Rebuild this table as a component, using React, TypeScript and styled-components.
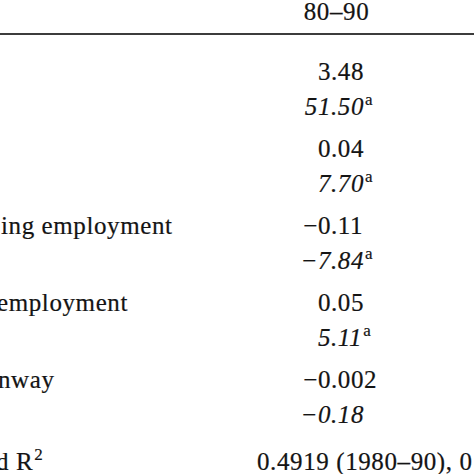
import styled, { createGlobalStyle } from "styled-components";

const GlobalStyle = createGlobalStyle`
  html, body {
    margin: 0;
    padding: 0;
    background: #ffffff;
    overflow: hidden;
  }
  #root {
    width: 474px;
    height: 474px;
    overflow: hidden;
  }
`

const Table = styled.div`
  width: 474px;
  font-family: "Liberation Serif", "Times New Roman", serif;
  font-size: 25px;
  letter-spacing: 0.6px;
  color: #141414;
  -webkit-text-stroke: 0.2px #141414;
`

const HeadRow = styled.div`
  display: grid;
  grid-template-columns: 290px 93px 1fr;
  line-height: 24px;
  padding-bottom: 9px;
  border-bottom: 2px solid #3c3c3c;
`

const HeadCell = styled.div`
  grid-column: 2;
  text-align: center;
  white-space: nowrap;
`

const Body = styled.div`
  display: flex;
  flex-direction: column;
  gap: 7px;
  padding-top: 19px;
`

const Group = styled.div`
  display: grid;
  grid-template-columns: 290px 93px 1fr;
  grid-auto-rows: 35px;
  line-height: 35px;
`

const Label = styled.div<{ $shift: number }>`
  grid-column: 1;
  margin-left: ${p => p.$shift}px;
  white-space: nowrap;
`

const Value = styled.div<{ $italic?: boolean }>`
  grid-column: 2;
  white-space: nowrap;
  font-style: ${p => (p.$italic ? "italic" : "normal")};
`

const IntPart = styled.span`
  display: inline-block;
  width: 41px;
  text-align: right;
`

const Sup = styled.sup`
  font-style: normal;
  font-size: 17px;
  letter-spacing: 0;
  line-height: 0;
  vertical-align: 10px;
  margin-left: 1px;
`

const FitRow = styled.div`
  display: grid;
  grid-template-columns: 257px 1fr;
  line-height: 35px;
  margin-top: 5px;
`

const FitValue = styled.div`
  white-space: nowrap;
`

type Row = {
  label: string
  shift: number
  coef: string
  t: string
  sig: boolean
}

const rows: Row[] = [
  { label: "", shift: 0, coef: "3.48", t: "51.50", sig: true },
  { label: "", shift: 0, coef: "0.04", t: "7.70", sig: true },
  { label: "ing employment", shift: 1, coef: "\u22120.11", t: "\u22127.84", sig: true },
  { label: "employment", shift: -3, coef: "0.05", t: "5.11", sig: true },
  { label: "nway", shift: -2, coef: "\u22120.002", t: "\u22120.18", sig: false },
]

function Num({ text }: { text: string }) {
  const dot = text.indexOf(".")
  return (
    <>
      <IntPart>{text.slice(0, dot)}</IntPart>
      {text.slice(dot)}
    </>
  )
}

export default function App() {
  return (
    <>
      <GlobalStyle />
      <Table>
        <HeadRow>
          <HeadCell>80–90</HeadCell>
        </HeadRow>
        <Body>
          {rows.map((r, i) => (
            <Group key={i}>
              <Label $shift={r.shift}>{r.label}</Label>
              <Value><Num text={r.coef} /></Value>
              <Label $shift={0} />
              <Value $italic>
                <Num text={r.t} />
                {r.sig && <Sup>a</Sup>}
              </Value>
            </Group>
          ))}
          <FitRow>
            <Label $shift={-4}>d R<Sup>2</Sup></Label>
            <FitValue>0.4919 (1980–90), 0</FitValue>
          </FitRow>
        </Body>
      </Table>
    </>
  )
}
